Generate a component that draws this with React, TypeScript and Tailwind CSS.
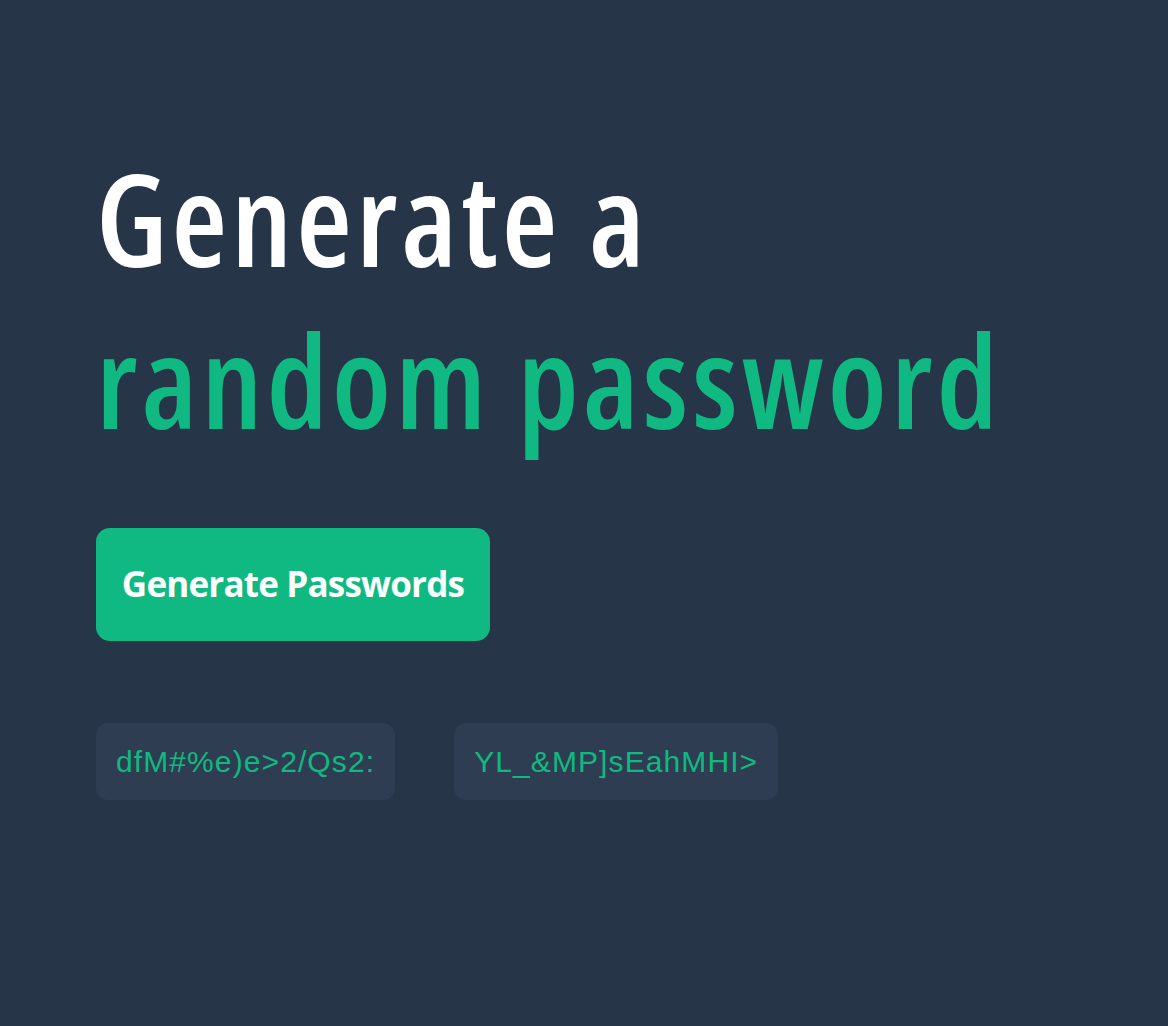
export default function App() {
  const passwords = ['dfM#%e)e>2/Qs2:', 'YL_&MP]sEahMHI>']

  return (
    <div className="min-h-screen w-full bg-[#273549] px-[96px] pt-[137px] font-['Open_Sans',sans-serif]">
      <h1 className="text-[128px] font-semibold font-stretch-condensed leading-[162px] tracking-[4px] text-white">
        Generate a
        <br />
        <span className="text-[#10b981]">random password</span>
      </h1>

      <button className="mt-[67px] h-[113px] w-[394px] rounded-[14px] bg-[#10b981] text-[35px] font-bold font-stretch-[94%] tracking-[-0.8px] text-white">
        Generate Passwords
      </button>

      <div className="mt-[82px] flex gap-[59px]">
        {passwords.map((pw) => (
          <div
            key={pw}
            className="flex h-[77px] items-center rounded-[12px] bg-[#2f3d52] px-[20px] font-['Liberation_Sans',Arial,sans-serif] text-[30px] tracking-[1.1px] text-[#10b981]"
          >
            {pw}
          </div>
        ))}
      </div>
    </div>
  )
}
